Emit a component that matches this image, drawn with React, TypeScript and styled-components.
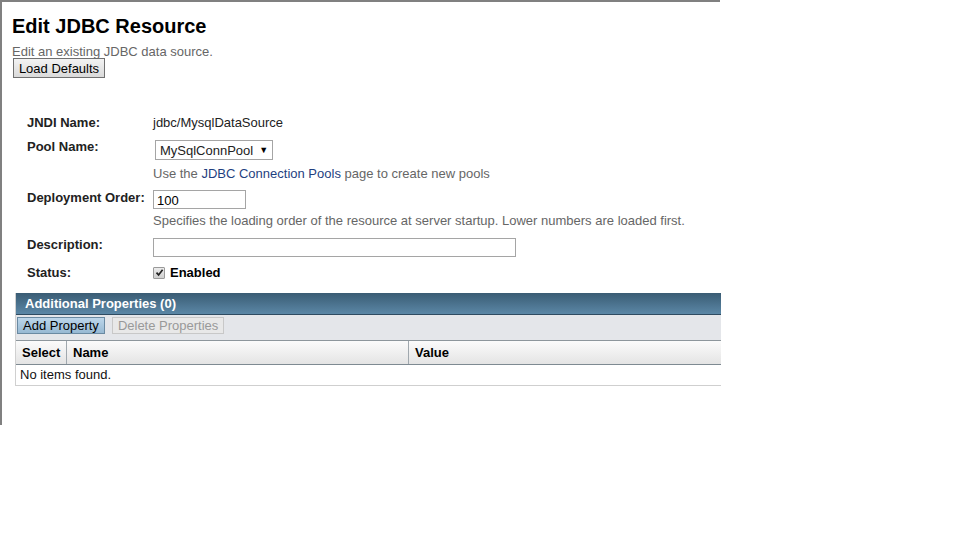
import React from "react"
import styled, {createGlobalStyle} from 'styled-components'

const GlobalStyle = createGlobalStyle`
  body {
    margin: 0;
    background: #fff;
    font-family: "Liberation Sans", Arial, sans-serif;
    font-size: 13px;
    color: #000;
  }
`;

const Frame = styled.div`
  width: 720px;
  height: 425px;
  border-left: 2px solid #808080;
  border-top: 2px solid #808080;
  padding: 0 0 0 10px;
  box-sizing: border-box;
`;

const Title = styled.h1`
  margin: 0;
  padding-top: 13px;
  font-size: 20px;
  font-weight: bold;
  line-height: 22px;
  color: #000;
`;

const Subtitle = styled.div`
  margin-top: 7px;
  color: #666;
  font-size: 13px;
  line-height: 15px;
`;

const LoadButton = styled.button`
  display: block;
  font-family: "Liberation Sans", Arial, sans-serif;
  font-size: 13px;
  width: 92px;
  height: 20px;
  padding: 0;
  margin: -1px 0 0 1px;
  border: 1px solid #707070;
  border-radius: 0;
  background: linear-gradient(#f3f3f3, #dadada);
  color: #000;
`;

const Form = styled.div`
  margin-top: 37px;
  padding-left: 15px;
  display: flex;
  flex-direction: column;
`;

const Row = styled.div<{mt?: number}>`
  display: flex;
  margin-top: ${p => p.mt || 0}px;
`;

const Label = styled.div`
  width: 126px;
  flex-shrink: 0;
  font-weight: bold;
  color: #222;
  line-height: 15px;
`;

const Field = styled.div<{mt?: number}>`
  display: flex;
  flex-direction: column;
  margin-top: ${p => p.mt || 0}px;
`;

const Value = styled.div`
  line-height: 15px;
  color: #222;
`;

const SelectBox = styled.div`
  margin-left: 2px;
  width: 118px;
  height: 20px;
  box-sizing: border-box;
  border: 1px solid #a5a5a5;
  display: flex;
  align-items: center;
  padding-left: 4px;
  gap: 6px;
  color: #222;
  font-size: 13px;
`;

const Arrow = styled.span`
  font-size: 9px;
  color: #000;
`;

const Help = styled.div<{mt?: number}>`
  color: #666;
  line-height: 15px;
  margin-top: ${p => p.mt || 0}px;
`;

const Link = styled.a`
  color: #1f3f7f;
  text-decoration: none;
`;

const TextInput = styled.div<{w: number; h: number}>`
  width: ${p => p.w}px;
  height: ${p => p.h}px;
  box-sizing: border-box;
  border: 1px solid #a5a5a5;
  padding: 2px 3px 0;
  font-size: 13px;
  line-height: 15px;
  color: #000;
`;

const CheckRow = styled.div`
  display: flex;
  align-items: center;
  gap: 5px;
  font-weight: bold;
  font-size: 13px;
  line-height: 15px;
`;

const CheckBox = styled.span`
  width: 12px;
  height: 12px;
  box-sizing: border-box;
  border: 1px solid #9a9a9a;
  border-radius: 1px;
  background: linear-gradient(#ececec, #cfcfcf);
  display: inline-flex;
  align-items: center;
  justify-content: center;
`;

const Table = styled.div`
  margin-top: 13px;
  margin-left: 3px;
  width: 705px;
  border-left: 1px solid #d0d0d0;
`;

const TableTitle = styled.div`
  height: 21px;
  background: linear-gradient(#3a5c74, #5b87a6);
  border-bottom: 1px solid #2e4b61;
  color: #fff;
  font-weight: bold;
  font-size: 13px;
  line-height: 22px;
  padding-left: 9px;
`;

const Toolbar = styled.div`
  height: 25px;
  background: #e4e6ea;
  display: flex;
  align-items: flex-start;
  gap: 7px;
  padding: 2px 0 0 1px;
  box-sizing: border-box;
`;

const ActionButton = styled.button<{disabled?: boolean}>`
  font-family: "Liberation Sans", Arial, sans-serif;
  font-size: 13px;
  height: 17px;
  line-height: 15px;
  padding: 0 5px;
  margin: 0;
  border-radius: 0;
  border: 1px solid ${p => (p.disabled ? '#c8c8c8' : '#6a8aa2')};
  background: ${p => (p.disabled ? '#e8e8e8' : 'linear-gradient(#bcd6ea, #97b9d3)')};
  color: ${p => (p.disabled ? '#999' : '#000')};
`;

const HeadRow = styled.div`
  display: flex;
  height: 25px;
  border-top: 1px solid #8d969c;
  border-bottom: 1px solid #7e8a92;
  box-sizing: border-box;
  background: linear-gradient(#fbfbfb, #e4e4e4);
`;

const HeadCell = styled.div<{w?: number}>`
  width: ${p => (p.w ? `${p.w}px` : 'auto')};
  flex: ${p => (p.w ? 'none' : 1)};
  font-weight: bold;
  font-size: 13px;
  line-height: 23px;
  padding-left: 6px;
  box-sizing: border-box;
  border-right: 1px solid #a0a8ae;
  &:last-child {
    border-right: none;
  }
`;

const EmptyRow = styled.div`
  height: 21px;
  box-sizing: border-box;
  border-bottom: 1px solid #cfcfcf;
  line-height: 20px;
  padding-left: 4px;
  color: #111;
`;

const App = () => {
    return (
        <>
            <GlobalStyle/>
            <Frame>
                <Title>Edit JDBC Resource</Title>
                <Subtitle>Edit an existing JDBC data source.</Subtitle>
                <LoadButton>Load Defaults</LoadButton>

                <Form>
                    <Row>
                        <Label>JNDI Name:</Label>
                        <Value>jdbc/MysqlDataSource</Value>
                    </Row>
                    <Row mt={9}>
                        <Label>Pool Name:</Label>
                        <Field mt={1}>
                            <SelectBox>MySqlConnPool <Arrow>▼</Arrow></SelectBox>
                            <Help mt={6}>
                                Use the <Link href="#">JDBC Connection Pools</Link> page to create new pools
                            </Help>
                        </Field>
                    </Row>
                    <Row mt={9}>
                        <Label>Deployment Order:</Label>
                        <Field>
                            <TextInput w={93} h={19}>100</TextInput>
                            <Help mt={4}>Specifies the loading order of the resource at server startup. Lower numbers are loaded first.</Help>
                        </Field>
                    </Row>
                    <Row mt={9}>
                        <Label>Description:</Label>
                        <Field mt={1}>
                            <TextInput w={363} h={19}></TextInput>
                        </Field>
                    </Row>
                    <Row mt={8}>
                        <Label>Status:</Label>
                        <CheckRow>
                            <CheckBox>
                                <svg width="9" height="9" viewBox="0 0 9 9">
                                    <path d="M1.5 4.6 L3.6 6.9 L7.6 1.8" fill="none" stroke="#222" strokeWidth="1.7"/>
                                </svg>
                            </CheckBox>
                            Enabled
                        </CheckRow>
                    </Row>
                </Form>

                <Table>
                    <TableTitle>Additional Properties (0)</TableTitle>
                    <Toolbar>
                        <ActionButton>Add Property</ActionButton>
                        <ActionButton disabled>Delete Properties</ActionButton>
                    </Toolbar>
                    <HeadRow>
                        <HeadCell w={51}>Select</HeadCell>
                        <HeadCell w={342}>Name</HeadCell>
                        <HeadCell>Value</HeadCell>
                    </HeadRow>
                    <EmptyRow>No items found.</EmptyRow>
                </Table>
            </Frame>
        </>
    )
};

export default App
